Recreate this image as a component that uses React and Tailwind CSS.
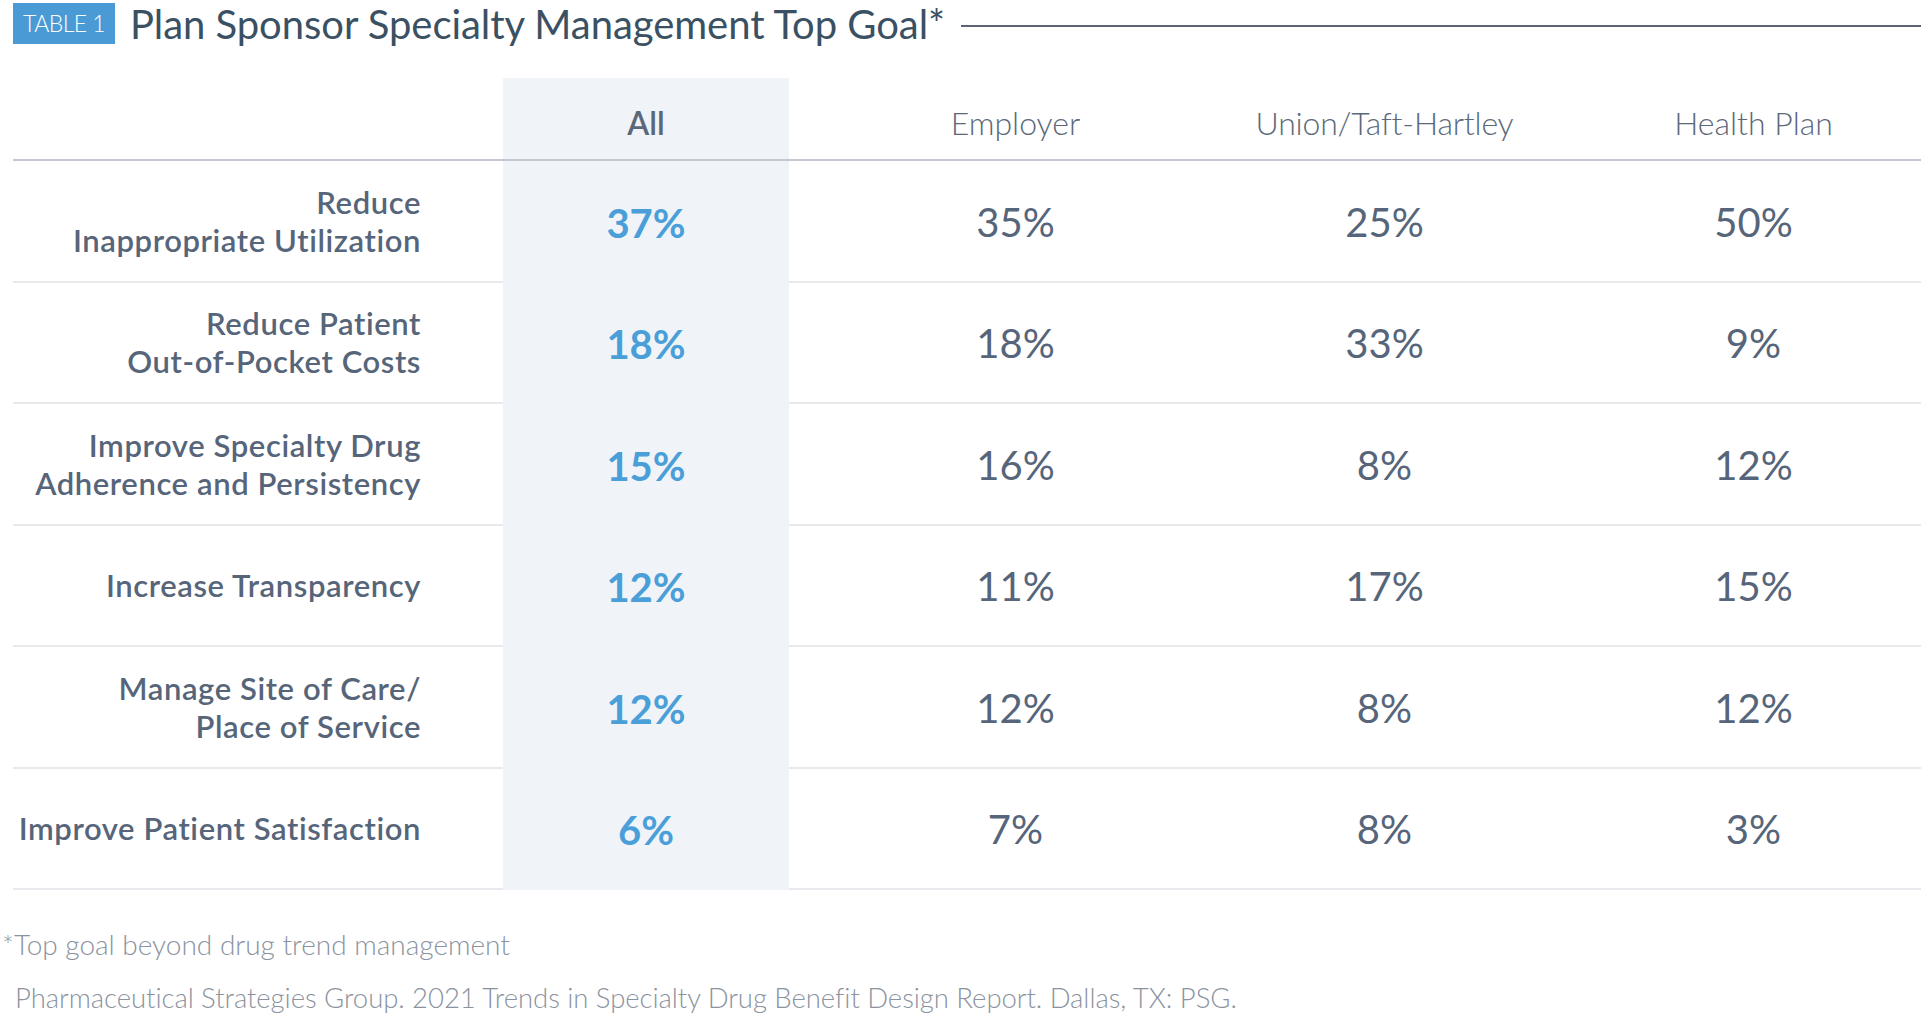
const rows = [
  { label: ["Reduce", "Inappropriate Utilization"], all: "37%", employer: "35%", union: "25%", health: "50%" },
  { label: ["Reduce Patient", "Out-of-Pocket Costs"], all: "18%", employer: "18%", union: "33%", health: "9%" },
  { label: ["Improve Specialty Drug", "Adherence and Persistency"], all: "15%", employer: "16%", union: "8%", health: "12%" },
  { label: ["Increase Transparency"], all: "12%", employer: "11%", union: "17%", health: "15%" },
  { label: ["Manage Site of Care/", "Place of Service"], all: "12%", employer: "12%", union: "8%", health: "12%" },
  { label: ["Improve Patient Satisfaction"], all: "6%", employer: "7%", union: "8%", health: "3%" },
];

const grid = "grid grid-cols-[490px_286px_411px_369px_1fr]";

function App() {
  return (
    <div className="w-[1921px] h-[1024px] bg-white overflow-hidden font-['Lato','Noto_Sans',sans-serif]">
      {/* Title bar */}
      <div className="flex items-center h-[43px] mt-[2px] pl-[13px]">
        <div className="h-[41px] w-[102px] bg-[#4a9bd5] flex items-center justify-center text-white text-[23px] font-light tracking-tight">
          TABLE 1
        </div>
        <h1 className="ml-[15px] text-[40px] leading-none text-[#3a5063] whitespace-nowrap tracking-[-0.05px]">
          Plan Sponsor Specialty Management Top Goal*
        </h1>
        <div className="flex-1 ml-[16px] mt-[4px] h-[2px] bg-[#5b6376]" />
      </div>

      {/* Table */}
      <div className="mt-[33px] pl-[13px]">
        <div className={`${grid} h-[83px] border-b-2 border-[#c5c7d0] items-center text-[32px] text-[#5b6879]`}>
          <div />
          <div className="h-full bg-[#f0f4f9] flex items-center justify-center pt-[8px] font-semibold">All</div>
          <div className="text-center pl-[42px] font-light pt-[8px]">Employer</div>
          <div className="text-center font-light pt-[8px] tracking-[-0.2px]">Union/Taft-Hartley</div>
          <div className="text-center pl-[17px] font-light pt-[8px]">Health Plan</div>
        </div>
        {rows.map((r, i) => (
          <div key={i} className={`${grid} h-[121.5px] text-[#56657a]`}>
            <div className="flex flex-col justify-center items-end pr-[82px] border-b-2 border-[#e8e9ec] text-[31px] leading-[38px] tracking-[0.6px] font-semibold text-right">
              {r.label.map((l) => (
                <span key={l} className="whitespace-nowrap">{l}</span>
              ))}
            </div>
            <div className="flex items-center justify-center bg-[#f0f4f9] text-[40px] font-bold text-[#4a9fd8] pt-[2px]">
              {r.all}
            </div>
            <div className="flex items-center justify-center pl-[42px] pt-[2px] border-b-2 border-[#e8e9ec] text-[40px]">
              {r.employer}
            </div>
            <div className="flex items-center justify-center pt-[2px] border-b-2 border-[#e8e9ec] text-[40px]">
              {r.union}
            </div>
            <div className="flex items-center justify-center pl-[17px] pt-[2px] border-b-2 border-[#e8e9ec] text-[40px]">
              {r.health}
            </div>
          </div>
        ))}
      </div>

      {/* Footnotes */}
      <p className="mt-[36px] pl-[2px] text-[28px] leading-[36px] font-light text-[#8b93a0]">
        *Top goal beyond drug trend management
      </p>
      <p className="mt-[18px] pl-[15px] text-[27.5px] leading-[36px] font-light text-[#8b93a0] tracking-[-0.05px]">
        Pharmaceutical Strategies Group. 2021 Trends in Specialty Drug Benefit Design Report. Dallas, TX: PSG.
      </p>
    </div>
  );
}

export default App;
